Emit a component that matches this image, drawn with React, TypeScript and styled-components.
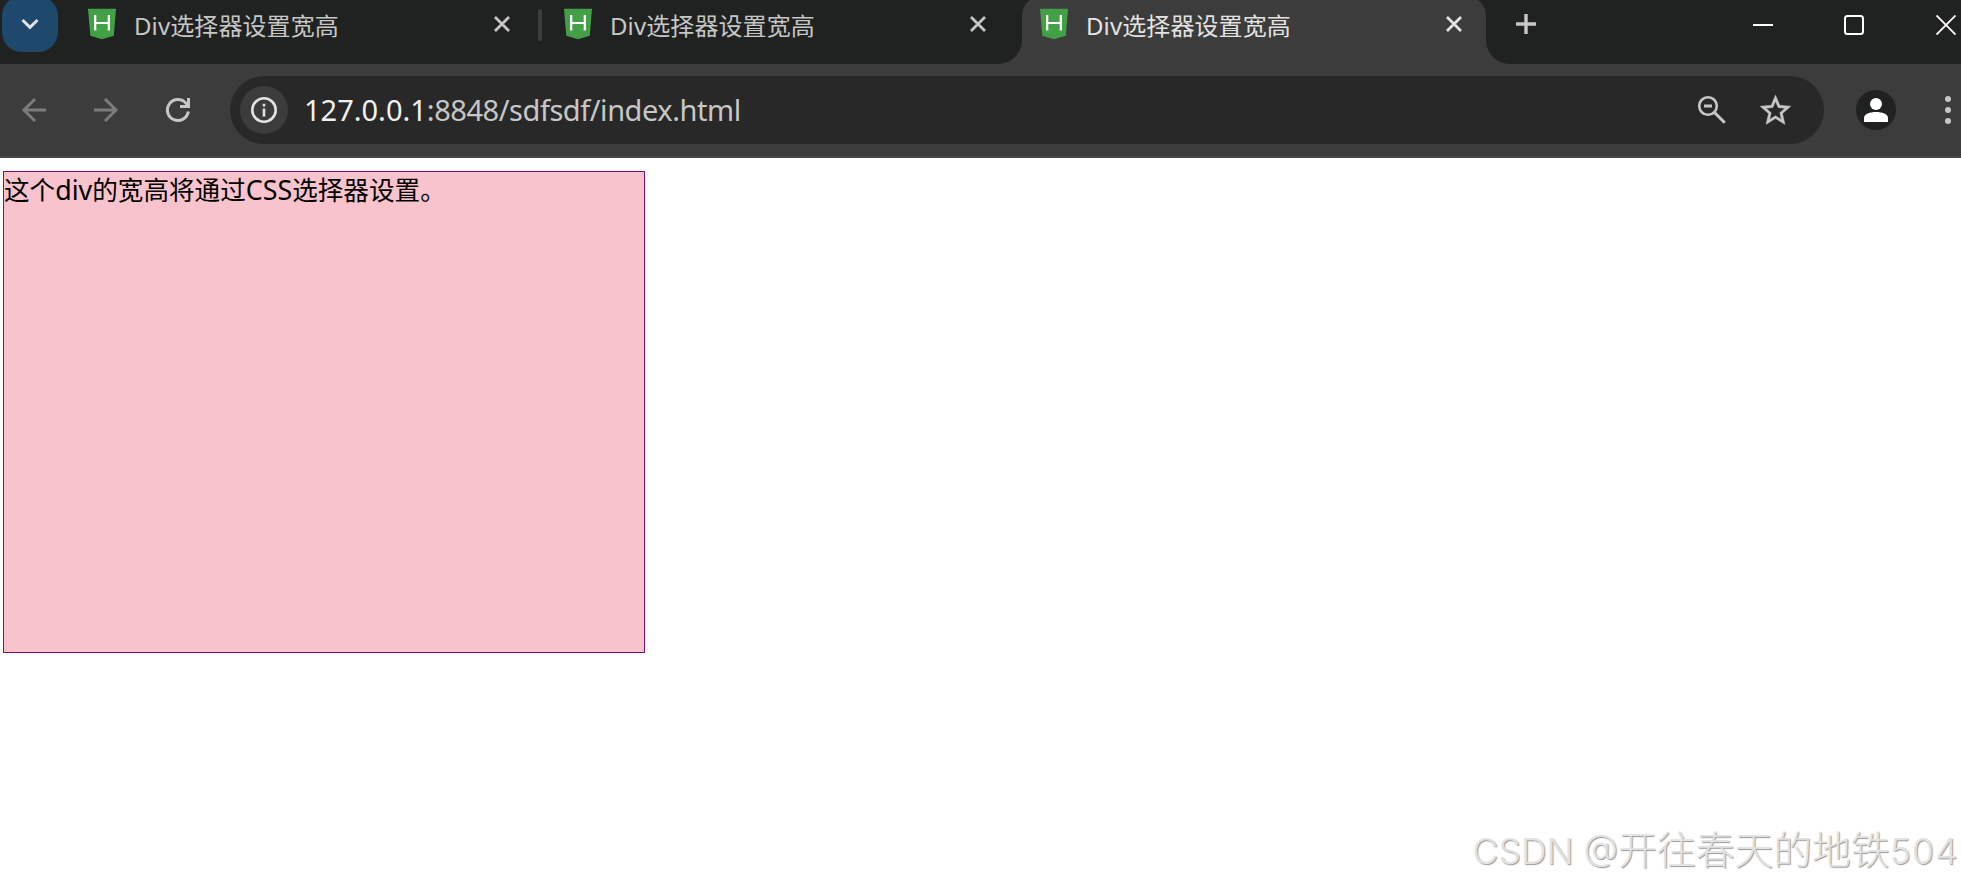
import React from 'react';
import styled, { createGlobalStyle } from 'styled-components';

const Global = createGlobalStyle`
  * { box-sizing: border-box; }
  body { margin: 0; background: #fff; overflow: hidden; }
  svg { display: block; flex: none; }
`;

const Window = styled.div`
  position: relative;
  display: flex;
  flex-direction: column;
  width: 1961px;
  height: 885px;
  overflow: hidden;
  background: #fff;
  font-family: 'Noto Sans', 'Noto Sans CJK SC', sans-serif;
`;

const TabBar = styled.header`
  display: flex;
  flex: none;
  height: 64px;
  background: #202221;
  overflow: hidden;
`;

const SearchTabs = styled.button`
  flex: none;
  display: flex;
  align-items: center;
  justify-content: center;
  width: 56px;
  height: 56px;
  margin: -4px 12px 0 2px;
  padding: 0;
  border: 0;
  border-radius: 20px;
  background: #1f486d;
`;

const Tab = styled.div<{ $active?: boolean }>`
  position: relative;
  flex: none;
  display: flex;
  align-items: flex-start;
  width: ${(p) => (p.$active ? 464 : 476)}px;
  height: 68px;
  margin-top: -4px;
  padding: 12px 0 0 18px;
  border-radius: 20px 20px 0 0;
  color: ${(p) => (p.$active ? '#e3e3e3' : '#c7c7c7')};
  background: ${(p) => (p.$active ? '#3c3c3c' : 'transparent')};

  &::before,
  &::after {
    content: '';
    display: ${(p) => (p.$active ? 'block' : 'none')};
    position: absolute;
    bottom: 0;
    width: 24px;
    height: 24px;
  }
  &::before {
    left: -24px;
    background: radial-gradient(circle at 0 0, transparent 23.5px, #3c3c3c 24.5px);
  }
  &::after {
    right: -24px;
    background: radial-gradient(circle at 100% 0, transparent 23.5px, #3c3c3c 24.5px);
  }
`;

const TabGroup = styled.div`
  display: flex;
`;

const TabTitle = styled.span`
  width: 360px;
  margin-left: 18px;
  padding-top: 2px;
  font-size: 24px;
  line-height: 32px;
  letter-spacing: 0.1px;
  white-space: nowrap;
`;

const CloseIcon = styled.svg`
  margin-top: 8px;
`;

const Divider = styled.i`
  width: 4px;
  height: 32px;
  margin: 1px 0 0 28px;
  border-radius: 2px;
  background: #3c3c3c;
`;

const NewTab = styled.svg`
  margin: 14px 0 0 30px;
`;

const WindowControls = styled.div`
  display: flex;
  margin: 15px 5px 0 auto;
  gap: 71px;

  svg:last-child { margin-left: 1px; }
`;

const Toolbar = styled.nav`
  display: flex;
  flex: none;
  align-items: center;
  height: 94px;
  padding-left: 16px;
  background: #3c3c3c;
  border-bottom: 2px solid #474747;
`;

const NavIcons = styled.div`
  display: flex;
  gap: 36px;
  width: 214px;
`;

const AddressBar = styled.div`
  display: flex;
  align-items: center;
  width: 1594px;
  height: 68px;
  padding: 0 30px 0 10px;
  border-radius: 34px;
  background: #282828;
`;

const SiteInfo = styled.div`
  display: grid;
  place-items: center;
  width: 48px;
  height: 48px;
  border-radius: 50%;
  background: #3c3c3c;
`;

const Url = styled.span`
  flex: 1;
  margin: -1px 0 0 16px;
  color: #c7c7c7;
  font-size: 29px;
  line-height: 40px;
  letter-spacing: -0.45px;
  white-space: nowrap;
`;

const Host = styled.span`
  color: #f0f0f0;
  letter-spacing: 0;
`;

const AddressActions = styled.div`
  display: flex;
  gap: 27px;
  align-items: center;
`;

const Avatar = styled.svg`
  margin-left: 32px;
`;

const Kebab = styled.svg`
  margin-left: 46px;
`;

const Page = styled.main`
  flex: 1;
  padding: 13px 0 0 3px;
`;

const DemoBox = styled.div`
  width: 642px;
  height: 482px;
  border: 1px solid #7a1080;
  background: #f8c3cc;
  color: #000;
  font-size: 25.6px;
  line-height: 38px;
  white-space: nowrap;
`;

const Latin = styled.span`
  font-size: 26.8px;
  line-height: 1;
`;

const Watermark = styled.div`
  position: absolute;
  right: 2px;
  bottom: 8px;
  color: #e2e2e2;
  font-family: Inter, 'Noto Sans CJK SC', sans-serif;
  font-weight: 300;
  font-size: 35.6px;
  line-height: 50px;
  text-shadow: 1px 1px 1px #999;
  white-space: nowrap;
`;

const WatermarkName = styled.span`
  font-size: 38.8px;
`;

const WatermarkNumber = styled.span`
  letter-spacing: 1.3px;
`;

const Favicon = () => (
  <svg width="28" height="32" viewBox="0 0 28 32">
    <path d="M0 .7h28l-2.2 27L14 31.3 2.3 27.7z" fill="#43a047" />
    <path d="M7.2 7v15.5M20.8 7v15.5M7.2 15h13.6" stroke="#fff" strokeWidth="2.2" fill="none" />
  </svg>
);

const Close = () => (
  <CloseIcon width="16" height="16" viewBox="0 0 16 16">
    <path d="M1 1l14 14M15 1L1 15" stroke="currentColor" strokeWidth="2.8" />
  </CloseIcon>
);

const TabItem = ({ active, divider }: { active?: boolean; divider?: boolean }) => (
  <Tab $active={active}>
    <Favicon />
    <TabTitle>Div选择器设置宽高</TabTitle>
    <Close />
    {divider && <Divider />}
  </Tab>
);

export default function App() {
  return (
    <Window>
      <Global />
      <TabBar>
        <SearchTabs>
          <svg width="18" height="12" viewBox="0 0 18 12">
            <path d="M1.5 2L9 9.3 16.5 2" fill="none" stroke="#e3e3e3" strokeWidth="3" />
          </svg>
        </SearchTabs>
        <TabGroup>
          <TabItem divider />
          <TabItem />
          <TabItem active />
        </TabGroup>
        <NewTab width="20" height="20" viewBox="0 0 20 20">
          <path d="M10 0v20M0 10h20" stroke="#c7c7c7" strokeWidth="3.4" />
        </NewTab>
        <WindowControls>
          <svg width="20" height="20" viewBox="0 0 20 20">
            <path d="M0 10h20" stroke="#fff" strokeWidth="2" />
          </svg>
          <svg width="20" height="20" viewBox="0 0 20 20">
            <rect x="1" y="1" width="18" height="18" rx="2.5" fill="none" stroke="#fff" strokeWidth="2" />
          </svg>
          <svg width="20" height="20" viewBox="0 0 20 20">
            <path d="M.5 .5l19 19M19.5 .5l-19 19" stroke="#fff" strokeWidth="1.9" />
          </svg>
        </WindowControls>
      </TabBar>

      <Toolbar>
        <NavIcons>
          <svg width="36" height="36" viewBox="0 0 36 36">
            <path d="M30 18H8M19 7L8 18l11 11" fill="none" stroke="#7c7c7c" strokeWidth="3" />
          </svg>
          <svg width="36" height="36" viewBox="0 0 36 36">
            <path d="M6 18h22M17 7l11 11-11 11" fill="none" stroke="#7c7c7c" strokeWidth="3" />
          </svg>
          <svg width="36" height="36" viewBox="0 0 36 36">
            <path d="M28.3 19.5A10.5 10.5 0 1 1 26 11.3l2.5 3M28.5 6v8.5H20" fill="none" stroke="#c7c7c7" strokeWidth="3" />
          </svg>
        </NavIcons>
        <AddressBar>
          <SiteInfo>
            <svg width="26" height="26" viewBox="0 0 26 26">
              <circle cx="13" cy="13" r="11.7" fill="none" stroke="#e3e3e3" strokeWidth="2.6" />
              <path d="M13 11.5v8M13 6.8v2.6" stroke="#e3e3e3" strokeWidth="2.6" />
            </svg>
          </SiteInfo>
          <Url><Host>127.0.0.1</Host>:8848/sdfsdf/index.html</Url>
          <AddressActions>
            <svg width="36" height="36" viewBox="0 0 36 36">
              <circle cx="14" cy="14" r="8.8" fill="none" stroke="#c7c7c7" strokeWidth="2.6" />
              <path d="M20.2 20.2L30.8 30.8M10 14h8" stroke="#c7c7c7" strokeWidth="3" />
            </svg>
            <svg width="37" height="37" viewBox="0 0 24 24">
              <path fill="#c7c7c7" stroke="#c7c7c7" strokeWidth=".25" d="M22 9.24l-7.19-.62L12 2 9.19 8.63 2 9.24l5.46 4.73L5.82 21 12 17.27 18.18 21l-1.63-7.03L22 9.24zM12 15.4l-3.76 2.27 1-4.28-3.32-2.88 4.38-.38L12 6.1l1.71 4.04 4.38.38-3.32 2.88 1 4.28L12 15.4z" />
            </svg>
          </AddressActions>
        </AddressBar>
        <Avatar width="40" height="40" viewBox="0 0 40 40">
          <circle cx="20" cy="20" r="20" fill="#202221" />
          <circle cx="20" cy="14" r="6" fill="#fff" />
          <path d="M8 32v-4c0-4 6-6 12-6s12 2 12 6v4z" fill="#fff" />
        </Avatar>
        <Kebab width="12" height="28" viewBox="0 0 12 28">
          <g fill="#c7c7c7">
            <circle cx="6" cy="3" r="3" />
            <circle cx="6" cy="14" r="3" />
            <circle cx="6" cy="25" r="3" />
          </g>
        </Kebab>
      </Toolbar>

      <Page>
        <DemoBox>
          这个<Latin>div</Latin>的宽高将通过<Latin>CSS</Latin>选择器设置。
        </DemoBox>
      </Page>
      <Watermark>
        CSDN @<WatermarkName>开往春天的地铁</WatermarkName>
        <WatermarkNumber>504</WatermarkNumber>
      </Watermark>
    </Window>
  );
}
